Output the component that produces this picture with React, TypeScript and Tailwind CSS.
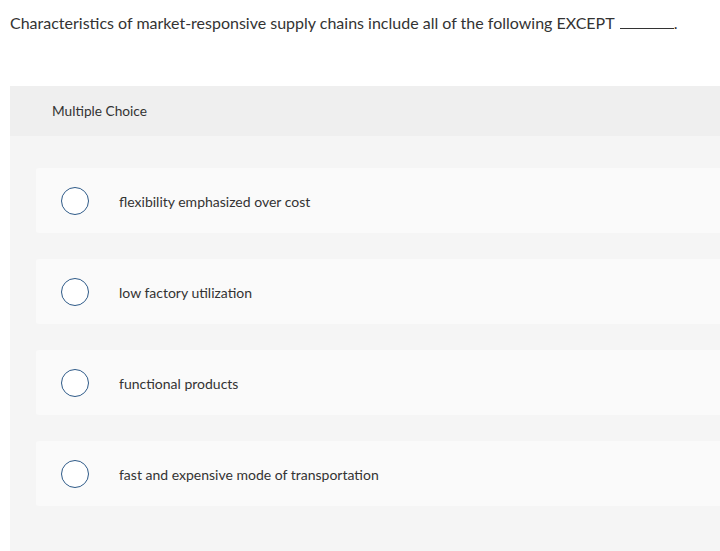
import React from "react";

const options = [
  "flexibility emphasized over cost",
  "low factory utilization",
  "functional products",
  "fast and expensive mode of transportation",
];

export default function App() {
  return (
    <div className="w-[720px] h-[551px] overflow-hidden bg-white text-[#333]" style={{ fontFamily: "Lato, 'Open Sans', sans-serif" }}>
      <div className="pl-[10px] pt-[12px] h-[86px] text-[16px] leading-[22px] text-[#333] flex items-baseline">
        <span>Characteristics of market-responsive supply chains include all of the following EXCEPT</span>
        <span className="inline-block w-[54px] ml-[5px] border-b border-[#333] h-[15px]" />
        <span>.</span>
      </div>
      <div className="ml-[10px] bg-[#f5f5f5] h-[465px]">
        <div className="h-[50px] bg-[#efefef] flex items-center pl-[42px] pt-[1px] text-[13.7px] text-[#333]">
          Multiple Choice
        </div>
        <div className="pl-[26px] pt-[32px] flex flex-col gap-[26px]">
          {options.map((o) => (
            <div key={o} className="h-[65px] bg-[#fafafa] rounded-l-[3px] flex items-center">
              <div className="ml-[25px] w-[28px] h-[28px] rounded-full border-[1.5px] border-[#2e5a88] bg-white" />
              <div className="ml-[30px] pt-[1px] text-[14px] text-[#333]">{o}</div>
            </div>
          ))}
        </div>
      </div>
    </div>
  );
}
